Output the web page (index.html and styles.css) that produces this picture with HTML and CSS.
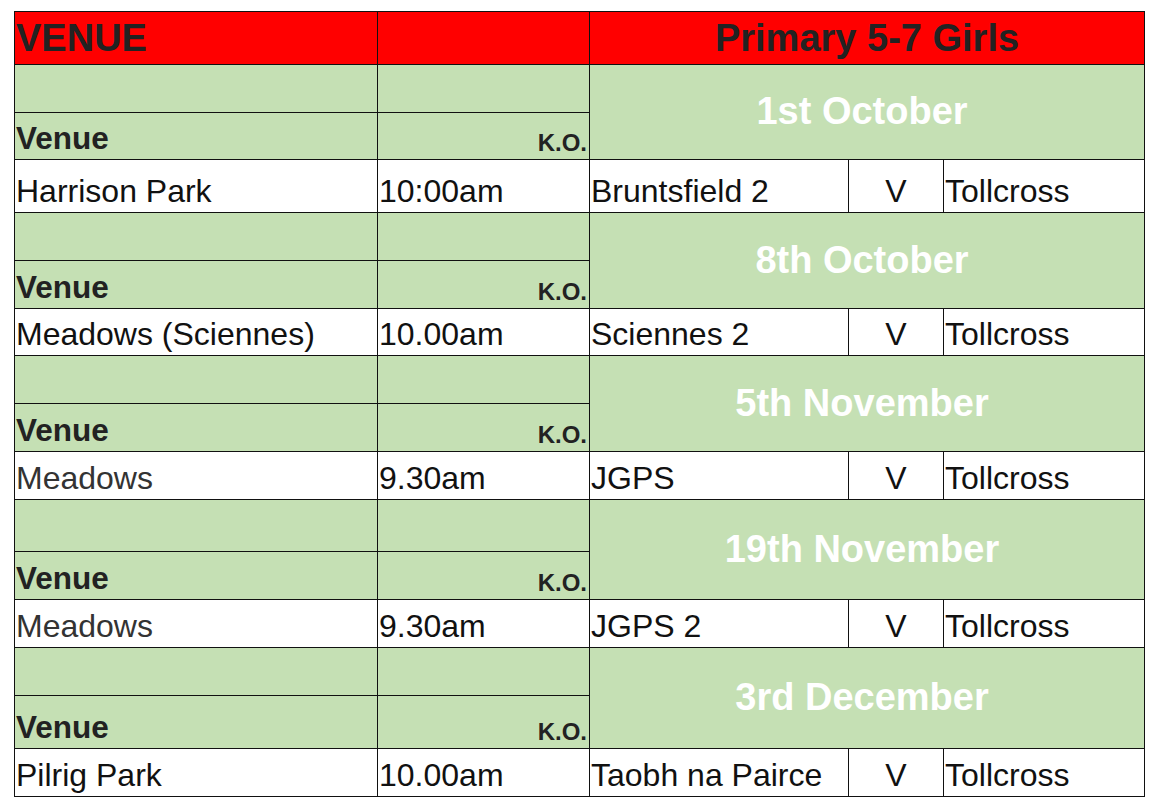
FILE: index.html
```html
<!DOCTYPE html>
<html>
<head>
<meta charset="utf-8">
<title>Primary 5-7 Girls</title>
<link rel="stylesheet" href="styles.css">
</head>
<body>
<div class="page">
<table class="fixtures">
  <colgroup>
    <col class="c-venue">
    <col class="c-ko">
    <col class="c-home">
    <col class="c-v">
    <col class="c-away">
  </colgroup>
  <tr class="head h53">
    <td class="title">VENUE</td>
    <td></td>
    <td colspan="3" class="title center">Primary 5-7 Girls</td>
  </tr>

  <tr class="green h48"><td></td><td></td><td rowspan="2" colspan="3" class="date">1st October</td></tr>
  <tr class="green h47"><td class="lbl">Venue</td><td class="ko">K.O.</td></tr>
  <tr class="data h53"><td>Harrison Park</td><td>10:00am</td><td>Bruntsfield 2</td><td class="center">V</td><td>Tollcross</td></tr>

  <tr class="green h48"><td></td><td></td><td rowspan="2" colspan="3" class="date">8th October</td></tr>
  <tr class="green h48"><td class="lbl">Venue</td><td class="ko">K.O.</td></tr>
  <tr class="data h47"><td>Meadows (Sciennes)</td><td>10.00am</td><td>Sciennes 2</td><td class="center">V</td><td>Tollcross</td></tr>

  <tr class="green h48"><td></td><td></td><td rowspan="2" colspan="3" class="date">5th November</td></tr>
  <tr class="green h48"><td class="lbl">Venue</td><td class="ko">K.O.</td></tr>
  <tr class="data h48"><td class="muted">Meadows</td><td>9.30am</td><td>JGPS</td><td class="center">V</td><td>Tollcross</td></tr>

  <tr class="green h52"><td></td><td></td><td rowspan="2" colspan="3" class="date">19th November</td></tr>
  <tr class="green h48"><td class="lbl">Venue</td><td class="ko">K.O.</td></tr>
  <tr class="data h48"><td class="muted">Meadows</td><td>9.30am</td><td>JGPS 2</td><td class="center">V</td><td>Tollcross</td></tr>

  <tr class="green h48"><td></td><td></td><td rowspan="2" colspan="3" class="date">3rd December</td></tr>
  <tr class="green h53"><td class="lbl">Venue</td><td class="ko">K.O.</td></tr>
  <tr class="data h48"><td>Pilrig Park</td><td>10.00am</td><td>Taobh na Pairce</td><td class="center">V</td><td>Tollcross</td></tr>
</table>
</div>
</body>
</html>
```

FILE: styles.css
```css
html, body {
  margin: 0;
  padding: 0;
  background: #ffffff;
}

.page {
  padding: 11px 0 0 14px;
}

.fixtures {
  border-collapse: collapse;
  table-layout: fixed;
  width: 1131px;
  font-family: "Liberation Sans", Arial, sans-serif;
  color: #111111;
}

.c-venue { width: 363px; }
.c-ko { width: 212px; }
.c-home { width: 259px; }
.c-v { width: 95px; }
.c-away { width: 201px; }

.fixtures td {
  border: 1px solid #111111;
  padding: 0 1px 3px 1px;
  vertical-align: bottom;
  font-size: 32px;
  line-height: 1.1;
  white-space: nowrap;
  overflow: hidden;
}

.h47 { height: 47px; }
.h48 { height: 48px; }
.h52 { height: 52px; }
.h53 { height: 53px; }

.head td {
  background: #ff0000;
}

.head .title {
  font-size: 38px;
  font-weight: bold;
  color: #222222;
  padding-bottom: 4px;
}

.green td {
  background: #c5e0b4;
}

.fixtures .lbl {
  font-size: 31.5px;
  font-weight: bold;
  color: #222222;
  padding-bottom: 3px;
}

.fixtures .ko {
  font-size: 24px;
  font-weight: bold;
  color: #222222;
  text-align: right;
  padding-right: 2px;
  padding-bottom: 3px;
}

.fixtures .date {
  font-size: 38px;
  font-weight: bold;
  color: #ffffff;
  text-align: center;
  vertical-align: middle;
  padding: 0 10px 0 0;
}

.data td {
  background: #ffffff;
}

.fixtures .center {
  text-align: center;
}

.fixtures .muted {
  color: #333333;
}
```
